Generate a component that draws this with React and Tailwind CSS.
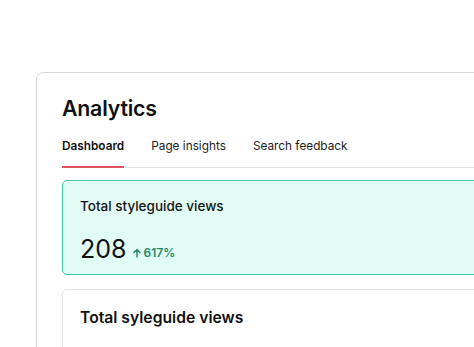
import React from 'react';

const tabs = ['Dashboard', 'Page insights', 'Search feedback'];

export default function App() {
  return (
    <div
      className="w-[474px] h-[347px] overflow-hidden bg-white"
      style={{ fontFamily: 'Inter, "Noto Sans", sans-serif' }}
    >
      <div className="ml-[36px] mt-[72px] w-[520px] h-[320px] rounded-[7px] border border-[#dcd9d2] bg-white pl-[25px] pt-[20px]">
        <h1 className="text-[21.3px] font-semibold leading-[30px] tracking-[-0.2px] text-[#111]">Analytics</h1>

        <div className="mt-[11px] flex border-b border-[#e5e5e5]">
          {tabs.map((t, i) => (
            <div
              key={t}
              className={
                i === 0
                  ? 'mr-[27px] -mb-px border-b-2 border-[#e2535f] pb-[9px] pt-[4px] text-[11.8px] font-semibold text-[#111]'
                  : 'mr-[27px] pb-[11px] pt-[4px] text-[11.8px] text-[#222]'
              }
            >
              {t}
            </div>
          ))}
        </div>

        <div className="mt-[12px] h-[95px] rounded-[5px] border border-[#3fcca4] bg-[#e1fbf5] pl-[17px] pt-[15px]">
          <div className="text-[13.5px] font-medium text-[#151515]">Total styleguide views</div>
          <div className="mt-[18px] flex items-baseline gap-[6px]">
            <span className="text-[25px] leading-[30px] text-[#111]">208</span>
            <span className="flex items-center text-[12px] font-semibold text-[#23896a]">
              <svg width="10" height="10" viewBox="0 0 10 10" className="mr-[1px]" fill="none" stroke="currentColor" strokeWidth="1.4" strokeLinecap="round" strokeLinejoin="round">
                <path d="M5 9V1.5M2 4.5l3-3 3 3" />
              </svg>
              617%
            </span>
          </div>
        </div>

        <div className="mt-[14px] h-[100px] rounded-[5px] border border-[#e5e5e5] bg-white pl-[17px] pt-[16px]">
          <div className="text-[15.7px] font-semibold text-[#111]">Total syleguide views</div>
        </div>
      </div>
    </div>
  );
}
